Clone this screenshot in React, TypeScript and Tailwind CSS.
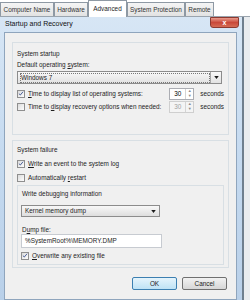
import React from "react";

function Check({ checked = false }: { checked?: boolean }) {
  return (
    <span className="flex h-[8px] w-[8px] shrink-0 items-center justify-center border border-[#8f8f8f] bg-gradient-to-br from-[#dcdcdc] to-[#fdfdfd]">
      {checked && (
        <svg viewBox="0 0 8 8" className="h-[7px] w-[7px]">
          <path d="M1.2 4.2 L3.1 6 L6.8 1.6" fill="none" stroke="#4a5f97" strokeWidth="1.3" />
        </svg>
      )}
    </span>
  );
}

function ArrowDown() {
  return (
    <svg viewBox="0 0 6 4" className="h-[3px] w-[5px]">
      <path d="M0 0 H6 L3 4 Z" fill="#1a1a1a" />
    </svg>
  );
}

function Spin({ disabled = false }: { disabled?: boolean }) {
  return (
    <div className={`flex h-[12px] w-[25px] border ${disabled ? "border-[#cfcfcf] bg-[#f4f4f4] text-[#a0a0a0]" : "border-[#abadb3] bg-white text-black"}`}>
      <span className="flex-1 pl-[4px] leading-[10px]">30</span>
      <div className="flex w-[8px] flex-col border-l border-[#d4d4d4]">
        <span className="flex flex-1 items-center justify-center text-[4px] leading-none text-[#8a8a8a]">▲</span>
        <span className="flex flex-1 items-center justify-center text-[4px] leading-none text-[#8a8a8a]">▼</span>
      </div>
    </div>
  );
}

function Row({ checked, children }: { checked?: boolean; children: React.ReactNode }) {
  return (
    <div className="flex h-[13px] items-center gap-[3px] whitespace-nowrap">
      <Check checked={checked} />
      <span>{children}</span>
    </div>
  );
}

const tabs = [
  { label: "Computer Name", w: "w-[54px]" },
  { label: "Hardware", w: "w-[34px]" },
  { label: "Advanced", w: "w-[39px]", active: true },
  { label: "System Protection", w: "w-[58px]" },
  { label: "Remote", w: "w-[29px]" },
];

export default function App() {
  return (
    <div className="flex h-[300px] w-[250px] flex-col overflow-hidden whitespace-nowrap bg-white text-[6.4px] text-[#1e1e1e]" style={{ fontFamily: '"Liberation Sans", Arial, sans-serif' }}>
      {/* Tab strip */}
      <div className="flex h-[17px] shrink-0 items-end border-b border-[#9aa4ae] bg-white">
        {tabs.map((t) =>
          t.active ? (
            <div key={t.label} className={`${t.w} -mb-px flex h-[17px] items-center justify-center border border-b-0 border-[#8e99a4] bg-white`}>
              {t.label}
            </div>
          ) : (
            <div key={t.label} className={`${t.w} flex h-[14px] items-center justify-center border border-b-0 border-[#8e99a4] bg-gradient-to-b from-[#f5f5f5] to-[#e2e2e2] text-[#333]`}>
              {t.label}
            </div>
          )
        )}
      </div>

      {/* Dialog + backdrop edge */}
      <div className="flex flex-1">
        <div className="flex w-[244px] flex-col border-r-2 border-[#6f7f8e] bg-gradient-to-b from-[#d7e6f5] via-[#c5daf0] to-[#b9d0e9]">
          {/* Title bar */}
          <div className="relative flex h-[15px] shrink-0 items-center pl-[5px] text-[7px] text-[#111]">
            <span>Startup and Recovery</span>
            <div className="absolute right-[3px] top-0 flex h-[11px] w-[29px] items-center justify-center rounded-b-[3px] border border-[#8c3a30] bg-gradient-to-b from-[#e89a8c] via-[#c9493a] to-[#d56b54] text-[7px] font-bold leading-none text-white">
              x
            </div>
          </div>

          {/* Client area */}
          <div className="ml-[4px] mr-[5px] flex flex-1 flex-col border border-[#8fa5bd] bg-[#f0f0f0] px-[7px] pt-[9px]">
            {/* System startup */}
            <div className="flex h-[93px] flex-col border border-[#d8dfe4] px-[4px] pt-[5px]">
              <div className="h-[11px] leading-[11px]">System startup</div>
              <div className="mt-[1px] h-[10px] leading-[10px]">
                Default operating <span className="underline">s</span>ystem:
              </div>
              <div className="mt-[1px] flex h-[13px] w-[205px] items-center border border-[#8c8c8c] bg-gradient-to-b from-[#f8f8f8] to-[#e2e2e2] pl-[2px]">
                <span className="flex-1 border border-dotted border-[#777] leading-[8px]">Windows 7</span>
                <span className="flex h-full w-[11px] items-center justify-center border-l border-[#a5a5a5]">
                  <ArrowDown />
                </span>
              </div>
              <div className="mt-[3px] flex items-center">
                <div className="w-[153px]">
                  <Row checked>
                    <span className="underline">T</span>ime to display list of operating systems:
                  </Row>
                </div>
                <Spin />
                <span className="ml-[6px]">seconds</span>
              </div>
              <div className="flex items-center">
                <div className="w-[153px]">
                  <Row>
                    Time to <span className="underline">d</span>isplay recovery options when needed:
                  </Row>
                </div>
                <Spin disabled />
                <span className="ml-[6px]">seconds</span>
              </div>
            </div>

            {/* System failure */}
            <div className="mt-[5px] flex h-[128px] flex-col border border-[#d8dfe4] px-[4px] pt-[3px]">
              <div className="h-[11px] leading-[11px]">System failure</div>
              <div className="mt-[2px]">
                <Row checked>
                  <span className="underline">W</span>rite an event to the system log
                </Row>
              </div>
              <div className="mt-[1px]">
                <Row>
                  Automatically <span className="underline">r</span>estart
                </Row>
              </div>
              <div className="mt-[1px] flex h-[80px] w-[207px] flex-col border border-[#d8dfe4] px-[3px] pt-[3px]">
                <div className="h-[10px] pl-[1px] leading-[10px]">Write debugging information</div>
                <div className="mt-[6px] flex h-[12px] w-[139px] items-center border border-[#8c8c8c] bg-gradient-to-b from-[#f8f8f8] to-[#dedede] pl-[3px]">
                  <span className="flex-1">Kernel memory dump</span>
                  <span className="flex w-[11px] items-center justify-center">
                    <ArrowDown />
                  </span>
                </div>
                <div className="mt-[8px] h-[9px] pl-[1px] leading-[9px]">
                  D<span className="underline">u</span>mp file:
                </div>
                <div className="flex h-[14px] w-[141px] items-center border border-[#c7cbd1] bg-white pl-[3px]">
                  %SystemRoot%\MEMORY.DMP
                </div>
                <div className="mt-[1px]">
                  <Row checked>
                    <span className="underline">O</span>verwrite any existing file
                  </Row>
                </div>
              </div>
            </div>

            {/* Buttons */}
            <div className="mt-[9px] flex justify-end gap-[5px] pr-[2px]">
              <button className="flex h-[13px] w-[45px] items-center justify-center rounded-[2px] border border-[#3c7fb1] bg-gradient-to-b from-[#e5f4fc] to-[#bfe2f5] text-[6.4px] text-[#222]">
                OK
              </button>
              <button className="flex h-[13px] w-[45px] items-center justify-center rounded-[2px] border border-[#707070] bg-gradient-to-b from-[#f2f2f2] to-[#d6d6d6] text-[6.4px] text-[#222]">
                Cancel
              </button>
            </div>
          </div>
        </div>
        <div className="flex-1 bg-[#e9ecef]" />
      </div>
    </div>
  );
}
